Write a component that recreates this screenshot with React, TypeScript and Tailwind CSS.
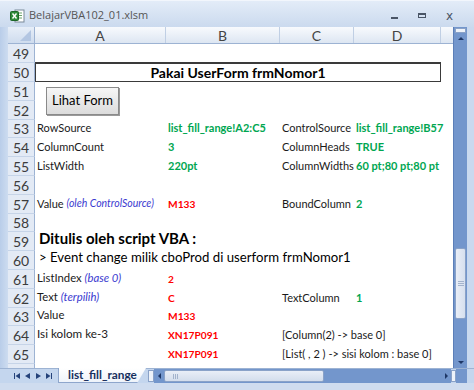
const green = 'text-[#00a651] font-bold text-[11px]'
const red = 'text-[#ff0000] font-bold text-[10.2px]'
const blue = 'text-[#3a3ad0] italic'

const RowHead = ({ n, h }: { n: number; h: string }) => (
  <div className={`${h} w-[27px] shrink-0 flex items-center justify-center bg-[#e3eaf5] border-b border-[#c6d4e8] border-r border-r-[#9db3d3] text-[14px] text-[#3c3c3c]`}>
    {n}
  </div>
)

const Cell = ({ w, children, className = '' }: { w: string; children?: React.ReactNode; className?: string }) => (
  <div className={`${w} shrink-0 pl-[2px] whitespace-nowrap flex items-end pb-[2px] ${className}`}>{children}</div>
)

const Row = ({ n, h, children }: { n: number; h: string; children?: React.ReactNode }) => (
  <div className={`flex ${h}`}>
    <RowHead n={n} h={h} />
    <div className="flex flex-1 bg-white text-[11px] text-[#1a1a1a]">{children}</div>
  </div>
)

const ExcelIcon = () => (
  <svg width="15" height="14" viewBox="0 0 15 14">
    <rect x="5" y="1" width="9" height="12" fill="#fff" stroke="#7a8a99" />
    <path d="M7 4h5M7 6.5h5M7 9h5" stroke="#6aa36a" strokeWidth="1" />
    <rect x="0.5" y="2.5" width="8" height="9" rx="1" fill="#2e8b3a" stroke="#1d6628" />
    <path d="M2.5 4.5l4 5M6.5 4.5l-4 5" stroke="#fff" strokeWidth="1.4" />
  </svg>
)

const App = () => {
  return (
    <div className="w-[474px] h-[390px] overflow-hidden flex flex-col bg-[#c7d8ee] font-['Lato',sans-serif]">
      {/* title bar */}
      <div className="h-[27px] shrink-0 flex items-center pl-[10px] pr-[21px] pt-[3px] bg-gradient-to-b from-[#e3ecf8] to-[#cbdaee] border-t border-[#f2f6fc]">
        <ExcelIcon />
        <span className="ml-[4px] text-[11px] text-[#555] font-['Open_Sans',sans-serif]">BelajarVBA102_01.xlsm</span>
        <div className="ml-auto flex items-center gap-[20px] text-[#4a5566]">
          <div className="w-[7px] h-[2px] bg-[#4a5566] mt-[4px]" />
          <div className="w-[8px] h-[5px] border border-[#4a5566] border-t-2" />
          <span className="text-[12px] leading-none font-['DejaVu_Sans',sans-serif]">x</span>
        </div>
      </div>

      <div className="flex flex-1 min-h-0">
        <div className="w-[8px] shrink-0 bg-gradient-to-r from-[#b9cde9] to-[#cddcf0]" />

        {/* sheet */}
        <div className="flex-1 flex flex-col min-w-0 overflow-hidden relative bg-white">
          {/* column headers */}
          <div className="h-[17px] shrink-0 flex bg-gradient-to-b from-[#f8fafd] to-[#dde6f2] border-b border-[#9db3d3] text-[14px] text-[#444]">
            <div className="w-[27px] shrink-0 relative bg-gradient-to-b from-[#e7eef8] to-[#cfdcee] border-r border-[#9db3d3]">
              <div className="absolute right-[3px] bottom-[2px] w-0 h-0 border-l-[11px] border-l-transparent border-b-[11px] border-b-[#b3c6e2]" />
            </div>
            <div className="w-[131px] shrink-0 flex items-center justify-center border-r border-[#c0cfe4]">A</div>
            <div className="w-[114px] shrink-0 flex items-center justify-center border-r border-[#c0cfe4]">B</div>
            <div className="w-[74px] shrink-0 flex items-center justify-center border-r border-[#c0cfe4]">C</div>
            <div className="w-[87px] shrink-0 flex items-center justify-center border-r border-[#c0cfe4]">D</div>
            <div className="flex-1" />
          </div>

          <Row n={49} h="h-[19px]" />
          <Row n={50} h="h-[19px]">
            <div className="w-[406px] shrink-0 -my-[1px] border-y-2 border-x border-[#3a3a3a] flex items-center justify-center font-bold text-[14px] text-black">
              Pakai UserForm frmNomor1
            </div>
          </Row>
          <Row n={51} h="h-[19px]" />
          <Row n={52} h="h-[19px]" />
          <Row n={53} h="h-[18px]">
            <Cell w="w-[131px]">RowSource</Cell>
            <Cell w="w-[114px]" className={green}>list_fill_range!A2:C5</Cell>
            <Cell w="w-[74px]">ControlSource</Cell>
            <Cell w="w-[87px]" className={green}>list_fill_range!B57</Cell>
          </Row>
          <Row n={54} h="h-[19px]">
            <Cell w="w-[131px]">ColumnCount</Cell>
            <Cell w="w-[114px]" className={green}>3</Cell>
            <Cell w="w-[74px]">ColumnHeads</Cell>
            <Cell w="w-[87px]" className={green}>TRUE</Cell>
          </Row>
          <Row n={55} h="h-[19px]">
            <Cell w="w-[131px]">ListWidth</Cell>
            <Cell w="w-[114px]" className={green}>220pt</Cell>
            <Cell w="w-[74px]">ColumnWidths</Cell>
            <Cell w="w-[87px]" className={green}>60 pt;80 pt;80 pt</Cell>
          </Row>
          <Row n={56} h="h-[19px]" />
          <Row n={57} h="h-[19px]">
            <Cell w="w-[131px]">
              Value&nbsp;<span className={`${blue} text-[10.5px]`}>(oleh ControlSource)</span>
            </Cell>
            <Cell w="w-[114px]" className={red}>M133</Cell>
            <Cell w="w-[74px]">BoundColumn</Cell>
            <Cell w="w-[87px]" className={green}>2</Cell>
          </Row>
          <Row n={58} h="h-[18px]" />
          <Row n={59} h="h-[19px]">
            <Cell w="w-[400px]" className="font-bold text-[15px] text-black pl-[4px]">Ditulis oleh script VBA :</Cell>
          </Row>
          <Row n={60} h="h-[19px]">
            <Cell w="w-[400px]" className="text-[13.2px] text-black pl-[4px]">&gt; Event change milik cboProd di userform frmNomor1</Cell>
          </Row>
          <Row n={61} h="h-[19px]">
            <Cell w="w-[131px]" className="text-[11.3px]">
              ListIndex&nbsp;<span className={blue}>(base 0)</span>
            </Cell>
            <Cell w="w-[114px]" className={red}>2</Cell>
          </Row>
          <Row n={62} h="h-[19px]">
            <Cell w="w-[131px]" className="text-[11.3px]">
              Text&nbsp;<span className={blue}>(terpilih)</span>
            </Cell>
            <Cell w="w-[114px]" className={red}>C</Cell>
            <Cell w="w-[74px]">TextColumn</Cell>
            <Cell w="w-[87px]" className={green}>1</Cell>
          </Row>
          <Row n={63} h="h-[18px]">
            <Cell w="w-[131px]" className="text-[11.3px]">Value</Cell>
            <Cell w="w-[114px]" className={red}>M133</Cell>
          </Row>
          <Row n={64} h="h-[19px]">
            <Cell w="w-[131px]" className="text-[11.7px]">Isi kolom ke-3</Cell>
            <Cell w="w-[114px]" className={red}>XN17P091</Cell>
            <Cell w="w-[160px]">[Column(2) -&gt; base 0]</Cell>
          </Row>
          <Row n={65} h="h-[19px]">
            <Cell w="w-[131px]" />
            <Cell w="w-[114px]" className={red}>XN17P091</Cell>
            <Cell w="w-[160px]">[List( , 2 ) -&gt; sisi kolom : base 0]</Cell>
          </Row>
          <Row n={66} h="h-[19px]" />

          {/* form button lying over rows 51-52 */}
          <button className="absolute left-[38px] top-[60px] w-[73px] h-[28px] bg-gradient-to-b from-[#f6f6f6] to-[#dcdcdc] border border-[#8a8a8a] shadow-[1px_1px_0_#9a9a9a] text-[13px] text-black">
            Lihat Form
          </button>
        </div>

        {/* vertical scrollbar */}
        <div className="w-[14px] shrink-0 flex flex-col bg-[#7396cc] border-l border-[#5c7fb8]">
          <div className="h-[5px] mx-[1px] mt-[1px] bg-[#eef3fa] border border-[#8aa2c8]" />
          <div className="h-[11px] flex items-center justify-center">
            <div className="w-0 h-0 border-x-[3px] border-x-transparent border-b-[3px] border-b-[#1e3766]" />
          </div>
          <div className="h-[204px]" />
          <div className="h-[71px] mx-[1px] bg-gradient-to-r from-[#e9eef7] to-[#d7e0ee] border border-[#8aa2c8] rounded-[2px] flex flex-col items-center justify-center gap-[1px]">
            <div className="w-[6px] h-px bg-[#a3b3cc]" />
            <div className="w-[6px] h-px bg-[#a3b3cc]" />
            <div className="w-[6px] h-px bg-[#a3b3cc]" />
          </div>
          <div className="flex-1" />
          <div className="h-[11px] flex items-center justify-center">
            <div className="w-0 h-0 border-x-[3px] border-x-transparent border-t-[3px] border-t-[#1e3766]" />
          </div>
        </div>
        <div className="w-[7px] shrink-0 bg-[#c9d9ef]" />
      </div>

      {/* tab bar + horizontal scrollbar */}
      <div className="h-[15px] shrink-0 flex items-stretch pl-[8px] pr-[7px] bg-[#c4d6ee] border-t border-[#9db3d3]">
        <div className="w-[50px] shrink-0 flex items-center justify-around px-[3px]">
          <svg width="6" height="6" viewBox="0 0 6 6"><path d="M0.5 0v6" stroke="#24427a" /><path d="M6 0L1.5 3 6 6z" fill="#24427a" /></svg>
          <svg width="5" height="6" viewBox="0 0 5 6"><path d="M5 0L0 3 5 6z" fill="#24427a" /></svg>
          <svg width="5" height="6" viewBox="0 0 5 6"><path d="M0 0L5 3 0 6z" fill="#24427a" /></svg>
          <svg width="6" height="6" viewBox="0 0 6 6"><path d="M0 0L4.5 3 0 6z" fill="#24427a" /><path d="M5.5 0v6" stroke="#24427a" /></svg>
        </div>
        <div className="relative w-[88px] shrink-0 -mt-px flex items-center pl-[9px] bg-gradient-to-b from-white to-[#eef3fa] border-b border-l border-[#8ea6cc] [clip-path:polygon(0_0,100%_0,90%_100%,0_100%)]">
          <span className="text-[11.8px] font-bold text-[#17305e] leading-none">list_fill_range</span>
        </div>
        <div className="w-[6px] shrink-0 my-[1px] ml-[2px] bg-[#eef3fa] border border-[#8aa2c8]" />
        <div className="w-[10px] shrink-0 flex items-center justify-center bg-[#7396cc]">
          <div className="w-0 h-0 border-y-[3px] border-y-transparent border-r-[3px] border-r-[#1e3766]" />
        </div>
        <div className="flex-1 flex bg-[#7396cc]">
          <div className="w-[160px] my-[1px] bg-gradient-to-b from-[#e9eef7] to-[#d3ddec] border border-[#8aa2c8] rounded-[2px] flex items-center pl-[8px] gap-[1px]">
            <div className="w-px h-[5px] bg-[#a3b3cc]" />
            <div className="w-px h-[5px] bg-[#a3b3cc]" />
            <div className="w-px h-[5px] bg-[#a3b3cc]" />
          </div>
        </div>
        <div className="w-[10px] shrink-0 flex items-center justify-center bg-[#7396cc]">
          <div className="w-0 h-0 border-y-[3px] border-y-transparent border-l-[3px] border-l-[#1e3766]" />
        </div>
        <div className="w-[5px] shrink-0 my-[1px] bg-[#eef3fa] border border-[#8aa2c8]" />
        <div className="w-[11px] shrink-0 bg-[#7396cc] flex items-end justify-end p-[2px]">
          <div className="w-[5px] h-[5px] bg-[radial-gradient(#dfe8f5_35%,transparent_40%)] bg-[length:2px_2px]" />
        </div>
      </div>
      <div className="h-[7px] shrink-0 bg-[#cfdcef]" />
    </div>
  )
}

export default App
